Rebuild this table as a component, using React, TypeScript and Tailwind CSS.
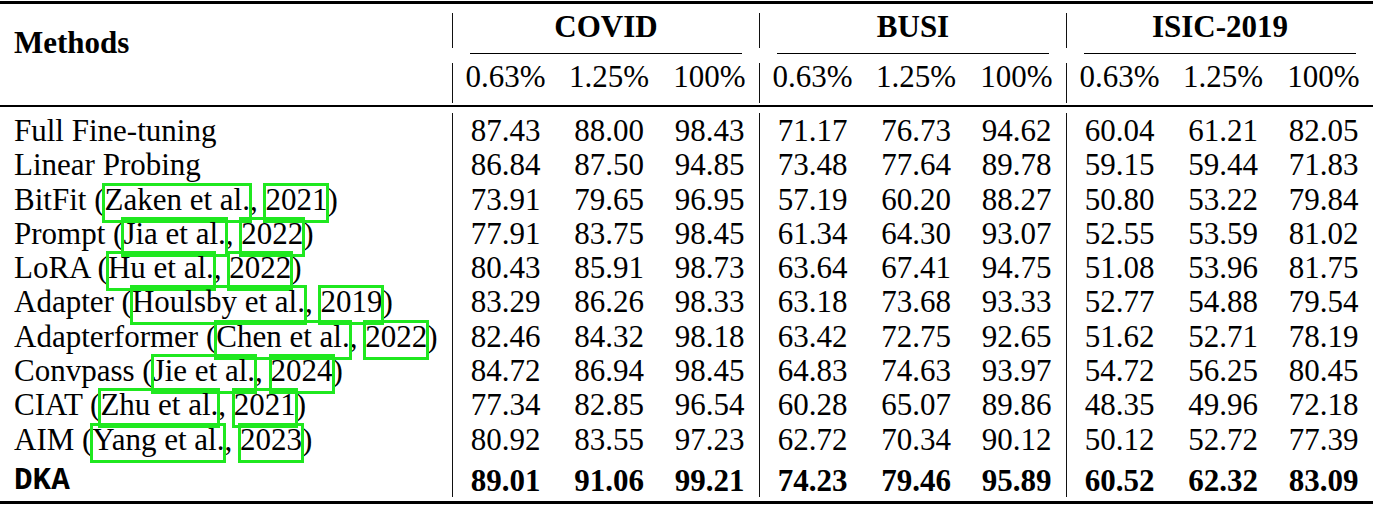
const groups = ['COVID', 'BUSI', 'ISIC-2019'];
const pcts = ['0.63%', '1.25%', '100%'];
const colW = ['w-[105px]', 'w-[102px]', 'w-[99px]'];

const methods: { name: string; cite?: [string, string] }[] = [
  { name: 'Full Fine-tuning' },
  { name: 'Linear Probing' },
  { name: 'BitFit', cite: ['Zaken et al.', '2021'] },
  { name: 'Prompt', cite: ['Jia et al.', '2022'] },
  { name: 'LoRA', cite: ['Hu et al.', '2022'] },
  { name: 'Adapter', cite: ['Houlsby et al.', '2019'] },
  { name: 'Adapterformer', cite: ['Chen et al.', '2022'] },
  { name: 'Convpass', cite: ['Jie et al.', '2024'] },
  { name: 'CIAT', cite: ['Zhu et al.', '2021'] },
  { name: 'AIM', cite: ['Yang et al.', '2023'] },
];

const data: string[][] = [
  ['87.43', '88.00', '98.43', '71.17', '76.73', '94.62', '60.04', '61.21', '82.05'],
  ['86.84', '87.50', '94.85', '73.48', '77.64', '89.78', '59.15', '59.44', '71.83'],
  ['73.91', '79.65', '96.95', '57.19', '60.20', '88.27', '50.80', '53.22', '79.84'],
  ['77.91', '83.75', '98.45', '61.34', '64.30', '93.07', '52.55', '53.59', '81.02'],
  ['80.43', '85.91', '98.73', '63.64', '67.41', '94.75', '51.08', '53.96', '81.75'],
  ['83.29', '86.26', '98.33', '63.18', '73.68', '93.33', '52.77', '54.88', '79.54'],
  ['82.46', '84.32', '98.18', '63.42', '72.75', '92.65', '51.62', '52.71', '78.19'],
  ['84.72', '86.94', '98.45', '64.83', '74.63', '93.97', '54.72', '56.25', '80.45'],
  ['77.34', '82.85', '96.54', '60.28', '65.07', '89.86', '48.35', '49.96', '72.18'],
  ['80.92', '83.55', '97.23', '62.72', '70.34', '90.12', '50.12', '52.72', '77.39'],
  ['89.01', '91.06', '99.21', '74.23', '79.46', '95.89', '60.52', '62.32', '83.09'],
];

// hyperref-style green link box
function Cite({ children }: { children: string }) {
  return (
    <span className="relative after:absolute after:-left-[2px] after:-right-[2px] after:top-[1px] after:-bottom-[6px] after:border-[3px] after:border-[#1fe81f] after:content-['']">
      {children}
    </span>
  );
}

function GroupHeader({ name }: { name: string }) {
  return (
    <div className="flex w-[307px] flex-col">
      <div className="flex h-[49px]">
        <div className="mt-[9px] h-[35px] w-px bg-[#111]" />
        <div className="flex-1 pt-[6px] text-center font-bold">{name}</div>
      </div>
      <div className="ml-[18px] mr-[17px] h-px bg-black" />
      <div className="flex h-[51px]">
        <div className="mt-[9px] h-[40px] w-px bg-[#111]" />
        {pcts.map((p, i) => (
          <div key={p} className={`${colW[i]} pt-[6px] text-center`}>
            {p}
          </div>
        ))}
      </div>
    </div>
  );
}

function GroupBody({ g }: { g: number }) {
  return (
    <div className="flex w-[307px]">
      <div className="mt-[6px] h-[384px] w-px bg-[#111]" />
      <div className="grid grid-cols-[105px_102px_99px] grid-rows-[repeat(10,34.3px)_41.3px] pt-[7px] text-center">
        {data.map((row, r) =>
          row.slice(g * 3, g * 3 + 3).map((v, c) => (
            <div key={`${r}-${c}`} className={r === data.length - 1 ? 'pt-[7px] font-bold' : ''}>
              {v}
            </div>
          ))
        )}
      </div>
    </div>
  );
}

export default function App() {
  return (
    <div className="h-[509px] w-[1376px] bg-white font-['Liberation_Serif',serif] text-[31px] leading-[34.3px] text-black">
      <div className="w-[1373px] pt-px">
        <div className="h-[3px] bg-black" />
        <div className="flex h-[101px]">
          <div className="w-[452px] pl-[14px] pt-[22px] font-bold">Methods</div>
          {groups.map((g) => (
            <GroupHeader key={g} name={g} />
          ))}
        </div>
        <div className="h-[2px] bg-black" />
        <div className="flex h-[394px]">
          <div className="w-[452px] pl-[14px] pt-[7px]">
            {methods.map((m) => (
              <div key={m.name} className="h-[34.3px] whitespace-nowrap">
                {m.name}
                {m.cite && (
                  <>
                    {' ('}
                    <Cite>{m.cite[0]}</Cite>
                    {', '}
                    <Cite>{m.cite[1]}</Cite>
                    {')'}
                  </>
                )}
              </div>
            ))}
            <div className="h-[41.3px] pt-[7px] font-['Liberation_Mono',monospace] font-bold">DKA</div>
          </div>
          {groups.map((g, i) => (
            <GroupBody key={g} g={i} />
          ))}
        </div>
        <div className="h-[3px] bg-black" />
      </div>
    </div>
  );
}
